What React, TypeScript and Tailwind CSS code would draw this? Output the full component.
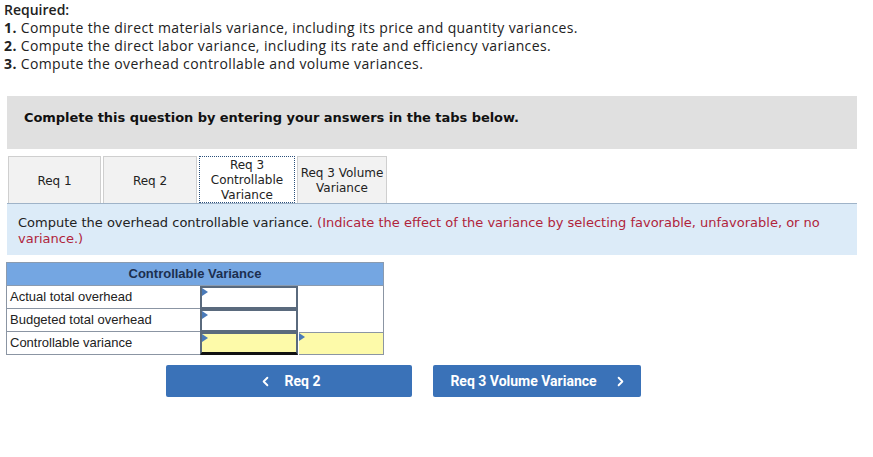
import { ChevronLeft, ChevronRight } from 'lucide-react'

const TABS = [
  { label: 'Req 1', active: false, w: 'w-[93px]' },
  { label: 'Req 2', active: false, w: 'w-[94px]' },
  { label: 'Req 3 Controllable Variance', active: true, w: 'w-[96px]' },
  { label: 'Req 3 Volume Variance', active: false, w: 'w-[90px]' },
]

const ROWS = [
  { label: 'Actual total overhead', last: false },
  { label: 'Budgeted total overhead', last: false },
  { label: 'Controllable variance', last: true },
]

function Marker() {
  return (
    <span className="absolute left-0 top-0 w-0 h-0 border-y-[4px] border-y-transparent border-l-[6px] border-l-[#4a7ab8]"></span>
  )
}

export default function App() {
  return (
    <div className="w-[873px] h-[457px] bg-white relative overflow-hidden">
      {/* Required */}
      <div className="pl-[4px] pt-[1px] font-['Open_Sans',Arial,sans-serif] text-[14px] leading-[18px] tracking-[0.38px] text-[#222]">
        <div className="font-semibold tracking-normal">Required:</div>
        <div><span className="font-bold">1.</span> Compute the direct materials variance, including its price and quantity variances.</div>
        <div><span className="font-bold">2.</span> Compute the direct labor variance, including its rate and efficiency variances.</div>
        <div><span className="font-bold">3.</span> Compute the overhead controllable and volume variances.</div>
      </div>

      {/* Gray banner */}
      <div className="mt-[23px] ml-[7px] w-[850px] h-[53px] bg-[#e0e0e0] flex items-center pl-[17px] pb-[9px] font-['DejaVu_Sans',Verdana,sans-serif] text-[13px] font-bold text-[#111] tracking-[-0.05px]">
        Complete this question by entering your answers in the tabs below.
      </div>

      {/* Tabs */}
      <div className="mt-[7px] ml-[8px] flex gap-[2px] h-[47px] font-['DejaVu_Sans',Verdana,sans-serif] text-[12px] leading-[15px] text-[#222]">
        {TABS.map((t) => (
          <div
            key={t.label}
            className={`${t.w} flex items-center justify-center text-center px-[2px] pt-[2px] ${
              t.active
                ? 'bg-white border border-dotted border-[#2a4f7a]'
                : 'bg-[#f2f2f2] border border-[#cfcfcf] border-b-0'
            }`}
          >
            {t.label}
          </div>
        ))}
      </div>

      {/* Instruction band */}
      <div className="ml-[7px] w-[850px] h-[52px] bg-[#dcebf8] border-t border-[#9fb3c8] pl-[11px] pr-[20px] pt-[11px] font-['DejaVu_Sans',Verdana,sans-serif] text-[13px] leading-[16px] text-[#222]">
        Compute the overhead controllable variance.{' '}
        <span className="text-[#b0243b]">(Indicate the effect of the variance by selecting favorable, unfavorable, or no variance.)</span>
      </div>

      {/* Table */}
      <div className="mt-[7px] ml-[6px] w-[378px] font-['Liberation_Sans',Arial,sans-serif] text-[13px] text-[#222]">
        <div className="h-[24px] bg-[#74a6e2] border border-[#8a9bb0] flex items-center justify-center font-bold text-[#1c2f4f]">
          Controllable Variance
        </div>
        {ROWS.map((r) => (
          <div key={r.label} className="flex h-[23px]">
            <div className="w-[194px] border-l border-b border-[#8b95a3] flex items-center pl-[3px]">{r.label}</div>
            <div
              className={`w-[98px] relative border-2 border-[#5a6a7d] ${
                r.last ? 'bg-[#fdfaa9] border-b-[3px] border-b-[#111]' : 'bg-white'
              }`}
            >
              <Marker />
            </div>
            <div
              className={`flex-1 relative border-r border-[#8b95a3] ${
                r.last ? 'bg-[#fdfaa9] border-t border-b border-[#8b95a3] ml-[1px]' : 'bg-white'
              }`}
            >
              {r.last && <Marker />}
            </div>
          </div>
        ))}
      </div>

      {/* Buttons */}
      <div className="mt-[10px] ml-[166px] flex gap-[21px] font-['Roboto',Arial,sans-serif] text-[14px] font-bold text-white">
        <button className="w-[246px] h-[32px] bg-[#3a72b8] rounded-[2px] flex items-center justify-center gap-[12px]">
          <ChevronLeft size={15} strokeWidth={3} />
          <span>Req 2</span>
        </button>
        <button className="w-[208px] h-[32px] bg-[#3a72b8] rounded-[2px] flex items-center justify-center gap-[16px] pl-[4px]">
          <span>Req 3 Volume Variance</span>
          <ChevronRight size={15} strokeWidth={3} />
        </button>
      </div>
    </div>
  )
}
